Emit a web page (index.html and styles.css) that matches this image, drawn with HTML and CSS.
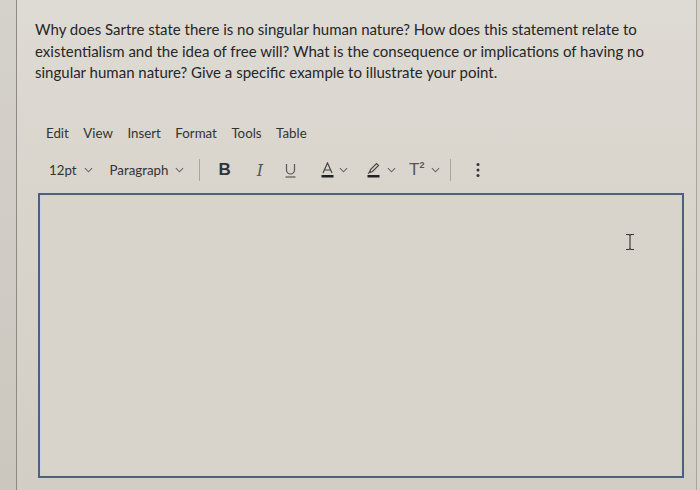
FILE: index.html
```html
<!DOCTYPE html>
<html>
<head>
<meta charset="utf-8">
<link rel="stylesheet" href="styles.css">
</head>
<body>
<div class="screen">
  <div class="gutter"></div>
  <div class="panel">
    <p class="question">Why does Sartre state there is no singular human nature? How does this statement relate to existentialism and the idea of free will? What is the consequence or implications of having no singular human nature? Give a specific example to illustrate your point.</p>
    <div class="menubar">
      <span>Edit</span><span>View</span><span>Insert</span><span>Format</span><span>Tools</span><span>Table</span>
    </div>
    <div class="toolbar">
      <span class="drop">12pt <svg class="chev" viewBox="0 0 10 6"><path d="M1 1l4 4 4-4"/></svg></span>
      <span class="drop para">Paragraph <svg class="chev" viewBox="0 0 10 6"><path d="M1 1l4 4 4-4"/></svg></span>
      <span class="sep"></span>
      <span class="btn bold">B</span>
      <span class="btn ital">I</span>
      <span class="btn und">
        <svg width="11" height="15" viewBox="0 0 11 15"><path d="M1.5 1v6a4 4 0 0 0 8 0V1" fill="none" stroke="#555" stroke-width="1.2"/><path d="M0.5 14h10" stroke="#555" stroke-width="1.2"/></svg>
      </span>
      <span class="btn drop2 fc">
        <svg width="13" height="16" viewBox="0 0 13 16"><path d="M2 11L6.5 1 11 11M3.5 8h6" fill="none" stroke="#444" stroke-width="1.2"/><rect x="0.5" y="13" width="12" height="2.5" fill="#222"/></svg>
        <svg class="chev" viewBox="0 0 10 6"><path d="M1 1l4 4 4-4"/></svg>
      </span>
      <span class="btn drop2 hl">
        <svg width="13" height="16" viewBox="0 0 13 16"><path d="M2.5 10.5l1-3 6-6 2 2-6 6z M2.5 10.5l-1.5 1" fill="none" stroke="#444" stroke-width="1.2"/><rect x="0.5" y="13" width="12" height="2.5" fill="#222"/></svg>
        <svg class="chev" viewBox="0 0 10 6"><path d="M1 1l4 4 4-4"/></svg>
      </span>
      <span class="btn drop2 sup"><span class="tt">T<sup>2</sup></span>
        <svg class="chev" viewBox="0 0 10 6"><path d="M1 1l4 4 4-4"/></svg>
      </span>
      <span class="sep sep2"></span>
      <span class="more">
        <svg width="4" height="16" viewBox="0 0 4 16"><circle cx="2" cy="2.5" r="1.5"/><circle cx="2" cy="8" r="1.5"/><circle cx="2" cy="13.5" r="1.5"/></svg>
      </span>
    </div>
    <div class="editor">
      <svg class="ibeam" width="10" height="18" viewBox="0 0 10 18"><path d="M1 1.5h3l1 1 1-1h3M5 2.5v13M1 16.5h3l1-1 1 1h3" fill="none" stroke="#333" stroke-width="1.1"/></svg>
    </div>
  </div>
</div>
</body>
</html>
```
FILE: styles.css
```css
html, body {
  margin: 0;
  padding: 0;
}
body {
  width: 700px;
  height: 490px;
  overflow: hidden;
  background: #d6d2ca;
  font-family: Lato, "Liberation Sans", sans-serif;
  color: #2b2b2b;
}
.screen {
  display: flex;
  height: 490px;
}
.gutter {
  width: 16px;
  flex: none;
  background: linear-gradient(#d5d2cb, #cbc7bf);
  border-right: 1px solid #8d8a84;
}
.panel {
  flex: 1;
  background: linear-gradient(#dedbd4, #d9d5cd 40%, #d3cec5);
  border-right: 1px solid #aaa69f;
  margin-right: 3px;
  padding: 0 0 0 18px;
  display: flex;
  flex-direction: column;
}
.question {
  margin: 19px 0 0 0;
  width: 632px;
  font-size: 15px;
  line-height: 21.7px;
  color: #262626;
}
.menubar {
  display: flex;
  gap: 14.5px;
  margin: 41px 0 0 11px;
  font-size: 13.3px;
  color: #333;
}
.toolbar {
  display: flex;
  align-items: center;
  margin: 17px 0 0 14px;
  height: 24px;
  font-size: 13.3px;
  color: #333;
}
.drop {
  display: flex;
  align-items: center;
  gap: 7px;
}
.para {
  margin-left: 17px;
}
.chev {
  width: 9px;
  height: 6px;
  fill: none;
  stroke: #666;
  stroke-width: 1.2;
}
.sep {
  width: 1px;
  height: 22px;
  background: #a9a6a0;
  margin: 0 18px 0 15px;
}
.btn {
  display: flex;
  align-items: center;
  justify-content: center;
}
.bold {
  font-family: "Liberation Sans", sans-serif;
  font-weight: bold;
  font-size: 17px;
  color: #333;
  margin-right: 26px;
}
.ital {
  font-family: "DejaVu Serif", serif;
  font-style: italic;
  font-size: 16px;
  color: #555;
  margin-right: 22px;
}
.und {
  margin-right: 25px;
}
.drop2 {
  gap: 5px;
}
.fc {
  margin-right: 19px;
}
.hl {
  gap: 7px;
  margin-right: 13px;
}
.sup {
  font-family: "Liberation Sans", sans-serif;
  font-size: 17px;
  color: #555;
  gap: 7px;
}
.tt sup {
  font-size: 9px;
  font-weight: bold;
  vertical-align: 7px;
  line-height: 0;
}
.sep2 {
  margin: 0 25px 0 10px;
}
.more svg {
  fill: #333;
  display: block;
}
.editor {
  position: relative;
  margin: 11px 0 0 3px;
  width: 642px;
  height: 281px;
  border: 2px solid #4f607c;
  box-shadow: inset 0 0 0 1px #c4d4e8;
  background: #d8d4cc;
}
.ibeam {
  position: absolute;
  left: 585px;
  top: 38px;
}
```
